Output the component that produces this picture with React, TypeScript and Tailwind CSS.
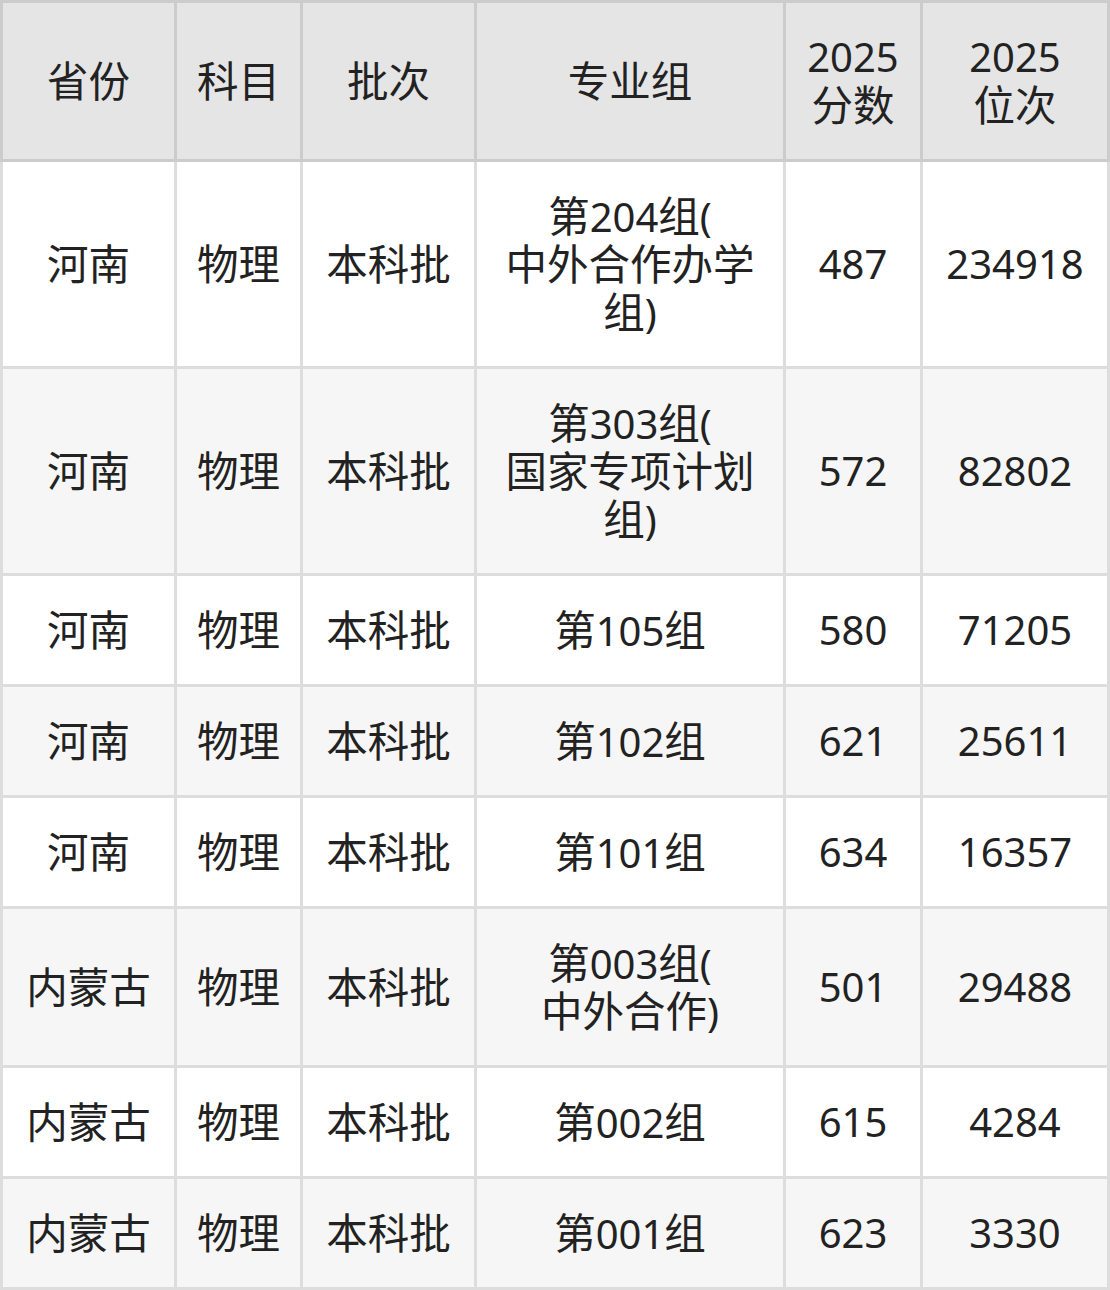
const header = [["省份"], ["科目"], ["批次"], ["专业组"], ["2025", "分数"], ["2025", "位次"]]

const rows: string[][][] = [
  [["河南"], ["物理"], ["本科批"], ["第204组(", "中外合作办学", "组)"], ["487"], ["234918"]],
  [["河南"], ["物理"], ["本科批"], ["第303组(", "国家专项计划", "组)"], ["572"], ["82802"]],
  [["河南"], ["物理"], ["本科批"], ["第105组"], ["580"], ["71205"]],
  [["河南"], ["物理"], ["本科批"], ["第102组"], ["621"], ["25611"]],
  [["河南"], ["物理"], ["本科批"], ["第101组"], ["634"], ["16357"]],
  [["内蒙古"], ["物理"], ["本科批"], ["第003组(", "中外合作)"], ["501"], ["29488"]],
  [["内蒙古"], ["物理"], ["本科批"], ["第002组"], ["615"], ["4284"]],
  [["内蒙古"], ["物理"], ["本科批"], ["第001组"], ["623"], ["3330"]],
]

const cols = "grid grid-cols-[171px_123px_171px_306px_134px_184px] gap-[3px]"

// CJK glyphs in the shot run a touch wider than Noto CJK at 40px
function Line({ text }: { text: string }) {
  const parts = text.match(/[\u4e00-\u9fff]+|[^\u4e00-\u9fff]+/g) || []
  return (
    <div className="h-[48px] whitespace-nowrap">
      {parts.map((p, i) =>
        /[\u4e00-\u9fff]/.test(p) ? (
          <span key={i} className="text-[41.5px]">
            {p}
          </span>
        ) : (
          <span key={i}>{p}</span>
        )
      )}
    </div>
  )
}

function Cell({ lines, bg }: { lines: string[]; bg: string }) {
  return (
    <div className={`${bg} flex items-center justify-center text-center py-[30px] px-1`}>
      <div>
        {lines.map((l, i) => (
          <Line key={i} text={l} />
        ))}
      </div>
    </div>
  )
}

export default function App() {
  return (
    <div
      className="w-[1110px] text-[40px] leading-[48px] text-[#222222]"
      style={{ fontFamily: '"Noto Sans", "Noto Sans CJK SC", sans-serif' }}
    >
      <div className={`${cols} bg-[#cccccc] p-[3px]`}>
        {header.map((h, i) => (
          <Cell key={i} lines={h} bg="bg-[#e5e5e5]" />
        ))}
      </div>
      <div className={`${cols} bg-[#dddddd] px-[3px] pb-[3px]`}>
        {rows.map((r, ri) =>
          r.map((c, ci) => (
            <Cell key={`${ri}-${ci}`} lines={c} bg={ri % 2 === 0 ? "bg-white" : "bg-[#f6f6f6]"} />
          ))
        )}
      </div>
    </div>
  )
}
